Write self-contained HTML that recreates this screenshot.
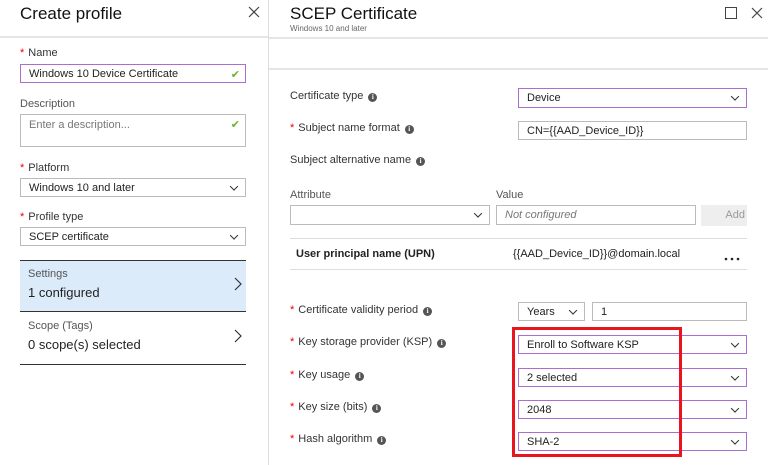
<!DOCTYPE html>
<html><head><style>
*{margin:0;padding:0;box-sizing:border-box}
body{width:768px;height:465px;overflow:hidden;background:#fff;font-family:"Liberation Sans",sans-serif;color:#222;position:relative;font-size:11px}
.a{position:absolute;white-space:nowrap}
.lbl{position:absolute;font-size:11px;color:#333;white-space:nowrap}
.st{color:#e00;margin-right:4px}
.box{position:absolute;border:1px solid #bbb;background:#fff;font-size:11px;padding-left:8px;display:flex;align-items:center}
.pu{border-color:#a86fd0}
.chev{position:absolute;right:8px;top:50%;width:6px;height:6px;border-right:1.3px solid #333;border-bottom:1.3px solid #333;transform:translateY(-75%) rotate(45deg)}
.i{display:inline-block;width:9px;height:9px;border-radius:50%;background:#555;color:#fff;font-size:7px;font-weight:bold;text-align:center;line-height:9px;margin-left:5px;vertical-align:0px;font-family:"Liberation Serif",serif}
.hl{position:absolute;height:1px;background:#ddd}
.ck{position:absolute;right:5px;top:3px;color:#6bb22b;font-size:11px}
</style></head><body>
<div class="a" style="left:268px;top:0;width:1px;height:465px;background:#ddd"></div>
<!-- left -->
<div class="a" style="left:20px;top:4px;font-size:17px;color:#111">Create profile</div>
<svg class="a" style="left:248px;top:6px" width="12" height="12"><path d="M1 1L11 11M11 1L1 11" stroke="#444" stroke-width="1.2"/></svg>
<div class="hl" style="left:0;top:36px;width:268px;background:#e5e5e5;height:2px"></div>
<div class="lbl" style="left:20px;top:47px"><span class="st">*</span>Name</div>
<div class="box pu" style="left:20px;top:64px;width:226px;height:19px">Windows 10 Device Certificate<span class="ck">✔</span></div>
<div class="lbl" style="left:20px;top:98px;color:#555">Description</div>
<div class="box" style="left:20px;top:114px;width:226px;height:33px;align-items:flex-start;padding-top:4px;color:#777">Enter a description...<span class="ck">✔</span></div>
<div class="lbl" style="left:20px;top:162px"><span class="st">*</span>Platform</div>
<div class="box" style="left:20px;top:178px;width:226px;height:19px">Windows 10 and later<span class="chev"></span></div>
<div class="lbl" style="left:20px;top:211px"><span class="st">*</span>Profile type</div>
<div class="box" style="left:20px;top:227px;width:226px;height:19px">SCEP certificate<span class="chev"></span></div>
<div class="a" style="left:20px;top:260px;width:226px;height:52px;background:#dcebfa;border-top:1px solid #333;border-bottom:1px solid #333"></div>
<div class="a" style="left:28px;top:268px;font-size:11px;color:#555">Settings</div>
<div class="a" style="left:28px;top:285px;font-size:13px;color:#222">1 configured</div>
<svg class="a" style="left:234px;top:277px" width="8" height="14"><path d="M1 1L7 7L1 13" stroke="#333" fill="none" stroke-width="1.2"/></svg>
<div class="a" style="left:28px;top:320px;font-size:11px;color:#555">Scope (Tags)</div>
<div class="a" style="left:28px;top:337px;font-size:13px;color:#222">0 scope(s) selected</div>
<svg class="a" style="left:234px;top:329px" width="8" height="14"><path d="M1 1L7 7L1 13" stroke="#333" fill="none" stroke-width="1.2"/></svg>
<div class="hl" style="left:20px;top:364px;width:226px;background:#333"></div>
<!-- right -->
<div class="a" style="left:290px;top:4px;font-size:17px;color:#111">SCEP Certificate</div>
<div class="a" style="left:290px;top:24px;font-size:8px;color:#666">Windows 10 and later</div>
<div class="a" style="left:725px;top:7px;width:12px;height:12px;border:1.2px solid #444"></div>
<svg class="a" style="left:751px;top:7px" width="12" height="12"><path d="M1 1L11 11M11 1L1 11" stroke="#444" stroke-width="1.2"/></svg>
<div class="hl" style="left:269px;top:37px;width:499px;background:#e5e5e5;height:2px"></div>
<div class="hl" style="left:269px;top:68px;width:499px;background:#e5e5e5;height:2px"></div>
<div class="lbl" style="left:290px;top:90px">Certificate type<span class="i">i</span></div>
<div class="box pu" style="left:518px;top:88px;width:229px;height:20px">Device<span class="chev"></span></div>
<div class="lbl" style="left:290px;top:122px"><span class="st">*</span>Subject name format<span class="i">i</span></div>
<div class="box" style="left:518px;top:121px;width:229px;height:19px">CN={{AAD_Device_ID}}</div>
<div class="lbl" style="left:290px;top:154px">Subject alternative name<span class="i">i</span></div>
<div class="lbl" style="left:290px;top:189px;color:#555">Attribute</div>
<div class="lbl" style="left:496px;top:189px;color:#555">Value</div>
<div class="box" style="left:290px;top:205px;width:200px;height:20px"><span class="chev"></span></div>
<div class="box" style="left:496px;top:205px;width:200px;height:20px;color:#777;font-style:italic">Not configured</div>
<div class="a" style="left:701px;top:205px;width:46px;height:21px;background:#eee;color:#999;font-size:11px;text-align:right;padding-right:2px;line-height:21px">Add</div>
<div class="hl" style="left:290px;top:238px;width:457px"></div>
<div class="a" style="left:296px;top:248px;font-size:11px;font-weight:bold;color:#222">User principal name (UPN)</div>
<div class="a" style="left:513px;top:248px;font-size:11px;color:#222">{{AAD_Device_ID}}@domain.local</div>
<svg class="a" style="left:724px;top:257px" width="16" height="4"><circle cx="2" cy="2" r="1.3" fill="#222"/><circle cx="8" cy="2" r="1.3" fill="#222"/><circle cx="14" cy="2" r="1.3" fill="#222"/></svg>
<div class="hl" style="left:290px;top:269px;width:457px"></div>
<div class="lbl" style="left:290px;top:304px"><span class="st">*</span>Certificate validity period<span class="i">i</span></div>
<div class="box" style="left:518px;top:302px;width:67px;height:19px">Years<span class="chev"></span></div>
<div class="box" style="left:592px;top:302px;width:155px;height:19px">1</div>
<div class="lbl" style="left:290px;top:336px"><span class="st">*</span>Key storage provider (KSP)<span class="i">i</span></div>
<div class="box pu" style="left:518px;top:335px;width:229px;height:19px">Enroll to Software KSP<span class="chev"></span></div>
<div class="lbl" style="left:290px;top:369px"><span class="st">*</span>Key usage<span class="i">i</span></div>
<div class="box pu" style="left:518px;top:368px;width:229px;height:19px">2 selected<span class="chev"></span></div>
<div class="lbl" style="left:290px;top:401px"><span class="st">*</span>Key size (bits)<span class="i">i</span></div>
<div class="box pu" style="left:518px;top:400px;width:229px;height:19px">2048<span class="chev"></span></div>
<div class="lbl" style="left:290px;top:433px"><span class="st">*</span>Hash algorithm<span class="i">i</span></div>
<div class="box pu" style="left:518px;top:432px;width:229px;height:19px">SHA-2<span class="chev"></span></div>
<div class="a" style="left:512px;top:327px;width:170px;height:130px;border:3px solid #e8141e"></div>
</body></html>
